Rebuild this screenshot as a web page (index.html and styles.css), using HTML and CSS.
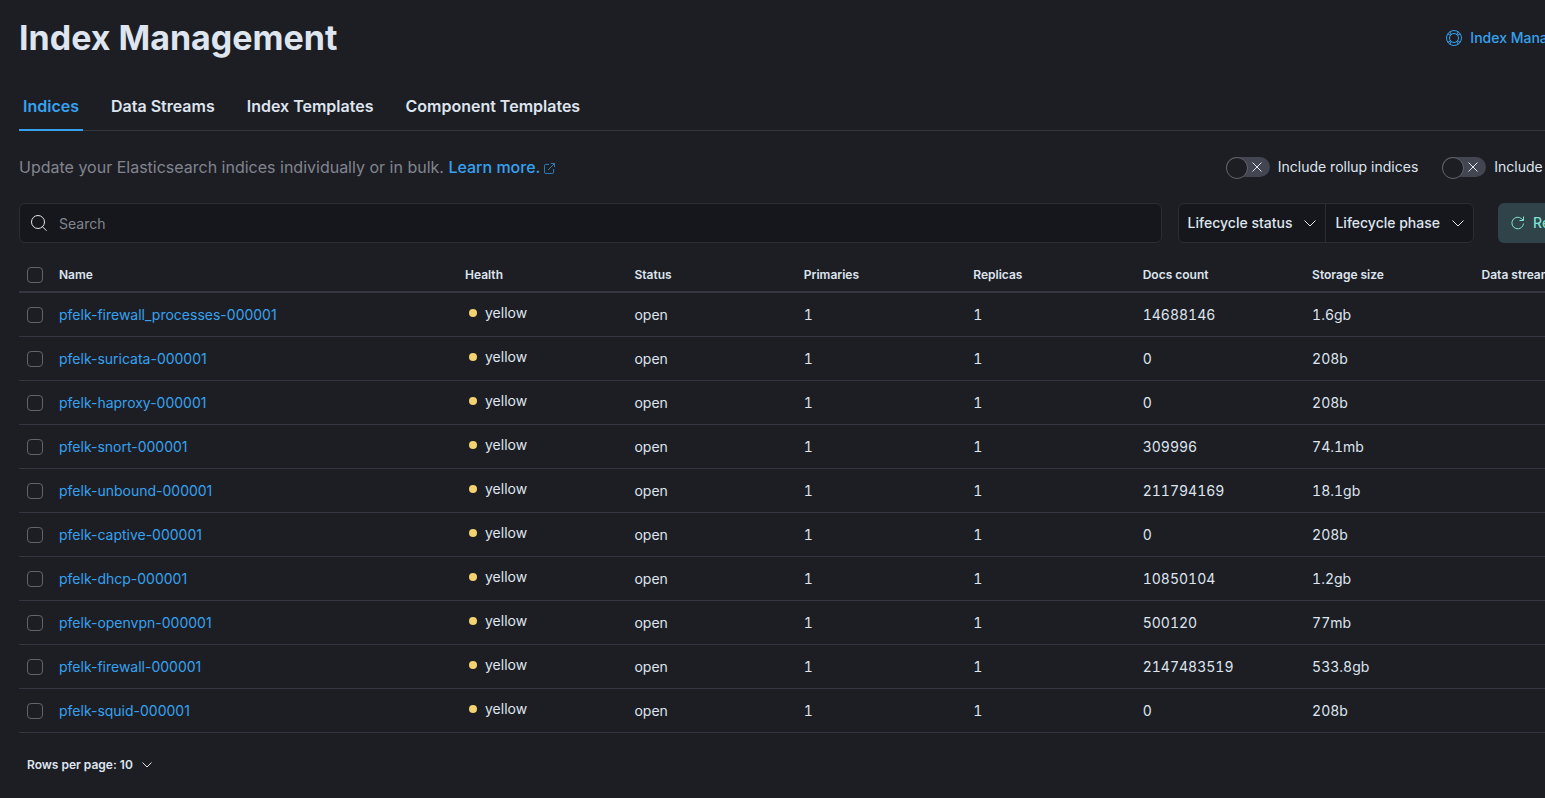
FILE: index.html
```html
<!DOCTYPE html>
<html lang="en">
<head>
  <meta charset="UTF-8">
  <meta name="viewport" content="width=device-width, initial-scale=1.0">
  <title>Index Management</title>
  <link rel="stylesheet" href="styles.css">
</head>
<body>
  <main class="page">
    <header class="page-header">
      <h1>Index Management</h1>
      <a class="docs-link" href="#docs">
        <svg width="16" height="16" viewBox="0 0 16 16" fill="none" stroke="currentColor"><circle cx="8" cy="8" r="7.5"/><circle cx="8" cy="8" r="4.5"/><path d="M1.800 3.800l3 1.500M3.800 1.800l1.500 3M12.200 1.800l-1.500 3M14.200 3.800l-3 1.500M14.200 12.200l-3-1.500M12.200 14.200l-1.500-3M3.800 14.200l1.500-3M1.800 12.200l3-1.500"/></svg>
        Index Management docs
      </a>
    </header>

    <nav class="tabs">
      <a class="tab active" href="#indices">Indices</a>
      <a class="tab" href="#data_streams">Data Streams</a>
      <a class="tab" href="#templates">Index Templates</a>
      <a class="tab" href="#component_templates">Component Templates</a>
    </nav>

    <div class="intro">
      <p class="description">Update your Elasticsearch indices individually or in bulk.
        <a href="#learn">Learn more.<svg class="external" width="11" height="11" viewBox="0 0 12 12" fill="none" stroke="currentColor"><path d="M5.500 1.500H2A1.500 1.500 0 0 0 .5 3v7A1.500 1.500 0 0 0 2 11.500h7A1.500 1.500 0 0 0 10.500 10V6.500M7.500.5h4V4.500M11.500.5L4.500 7.500"/></svg></a>
      </p>
      <div class="switches">
        <label class="switch">
          <span class="switch-body">
            <input type="checkbox">
            <svg width="10" height="10" viewBox="0 0 10 10" stroke="currentColor"><path d="M.5.5l9 9M9.500.5l-9 9"/></svg>
          </span>
          Include rollup indices
        </label>
        <label class="switch">
          <span class="switch-body">
            <input type="checkbox">
            <svg width="10" height="10" viewBox="0 0 10 10" stroke="currentColor"><path d="M.5.5l9 9M9.500.5l-9 9"/></svg>
          </span>
          Include hidden indices
        </label>
      </div>
    </div>

    <div class="toolbar">
      <label class="search">
        <svg width="16" height="16" viewBox="0 0 16 16" fill="none" stroke="currentColor"><circle cx="7" cy="7" r="6.500"/><path d="M11.300 11.500l4 4" stroke-linecap="round"/></svg>
        <input type="search" placeholder="Search" aria-label="Search">
      </label>
      <div class="filters">
        <button class="filter">Lifecycle status <svg width="12" height="7" viewBox="0 0 12 7" fill="none" stroke="currentColor"><path d="M.5.5L6 6 11.500.5"/></svg></button>
        <button class="filter">Lifecycle phase <svg width="12" height="7" viewBox="0 0 12 7" fill="none" stroke="currentColor"><path d="M.5.5L6 6 11.500.5"/></svg></button>
      </div>
      <button class="reload">
        <svg width="14" height="14" viewBox="0 0 14 14" fill="none" stroke="currentColor"><path d="M12.500 7.500A5.800 5.800 0 1 1 10.800 2.900L12.500 4.500M12.500.5v4h-4"/></svg>
        Reload indices
      </button>
    </div>

    <table class="indices">
      <thead>
        <tr>
          <th class="check"><input type="checkbox" aria-label="Select all rows"></th>
          <th class="name">Name</th>
          <th>Health</th>
          <th>Status</th>
          <th>Primaries</th>
          <th>Replicas</th>
          <th>Docs count</th>
          <th>Storage size</th>
          <th>Data stream</th>
        </tr>
      </thead>
      <tbody>
        <tr>
          <td class="check"><input type="checkbox" aria-label="Select pfelk-firewall_processes-000001"></td>
          <td><a href="#index">pfelk-firewall_processes-000001</a></td>
          <td><span class="health">yellow</span></td>
          <td>open</td>
          <td>1</td>
          <td>1</td>
          <td>14688146</td>
          <td>1.6gb</td>
          <td></td>
        </tr>
        <tr>
          <td class="check"><input type="checkbox" aria-label="Select pfelk-suricata-000001"></td>
          <td><a href="#index">pfelk-suricata-000001</a></td>
          <td><span class="health">yellow</span></td>
          <td>open</td>
          <td>1</td>
          <td>1</td>
          <td>0</td>
          <td>208b</td>
          <td></td>
        </tr>
        <tr>
          <td class="check"><input type="checkbox" aria-label="Select pfelk-haproxy-000001"></td>
          <td><a href="#index">pfelk-haproxy-000001</a></td>
          <td><span class="health">yellow</span></td>
          <td>open</td>
          <td>1</td>
          <td>1</td>
          <td>0</td>
          <td>208b</td>
          <td></td>
        </tr>
        <tr>
          <td class="check"><input type="checkbox" aria-label="Select pfelk-snort-000001"></td>
          <td><a href="#index">pfelk-snort-000001</a></td>
          <td><span class="health">yellow</span></td>
          <td>open</td>
          <td>1</td>
          <td>1</td>
          <td>309996</td>
          <td>74.1mb</td>
          <td></td>
        </tr>
        <tr>
          <td class="check"><input type="checkbox" aria-label="Select pfelk-unbound-000001"></td>
          <td><a href="#index">pfelk-unbound-000001</a></td>
          <td><span class="health">yellow</span></td>
          <td>open</td>
          <td>1</td>
          <td>1</td>
          <td>211794169</td>
          <td>18.1gb</td>
          <td></td>
        </tr>
        <tr>
          <td class="check"><input type="checkbox" aria-label="Select pfelk-captive-000001"></td>
          <td><a href="#index">pfelk-captive-000001</a></td>
          <td><span class="health">yellow</span></td>
          <td>open</td>
          <td>1</td>
          <td>1</td>
          <td>0</td>
          <td>208b</td>
          <td></td>
        </tr>
        <tr>
          <td class="check"><input type="checkbox" aria-label="Select pfelk-dhcp-000001"></td>
          <td><a href="#index">pfelk-dhcp-000001</a></td>
          <td><span class="health">yellow</span></td>
          <td>open</td>
          <td>1</td>
          <td>1</td>
          <td>10850104</td>
          <td>1.2gb</td>
          <td></td>
        </tr>
        <tr>
          <td class="check"><input type="checkbox" aria-label="Select pfelk-openvpn-000001"></td>
          <td><a href="#index">pfelk-openvpn-000001</a></td>
          <td><span class="health">yellow</span></td>
          <td>open</td>
          <td>1</td>
          <td>1</td>
          <td>500120</td>
          <td>77mb</td>
          <td></td>
        </tr>
        <tr>
          <td class="check"><input type="checkbox" aria-label="Select pfelk-firewall-000001"></td>
          <td><a href="#index">pfelk-firewall-000001</a></td>
          <td><span class="health">yellow</span></td>
          <td>open</td>
          <td>1</td>
          <td>1</td>
          <td>2147483519</td>
          <td>533.8gb</td>
          <td></td>
        </tr>
        <tr>
          <td class="check"><input type="checkbox" aria-label="Select pfelk-squid-000001"></td>
          <td><a href="#index">pfelk-squid-000001</a></td>
          <td><span class="health">yellow</span></td>
          <td>open</td>
          <td>1</td>
          <td>1</td>
          <td>0</td>
          <td>208b</td>
          <td></td>
        </tr>
      </tbody>
    </table>

    <button class="page-size">Rows per page: 10 <svg width="10" height="6" viewBox="0 0 10 6" fill="none" stroke="currentColor"><path d="M.5.5L5 5 9.500.5"/></svg></button>
  </main>
</body>
</html>
```
FILE: styles.css
```css
* {
  box-sizing: border-box;
}
body {
  margin: 0;
  background: #1d1e24;
  color: #dfe5ef;
  font-family: Inter, sans-serif;
  font-size: 14px;
  line-height: 24px;
  overflow-x: hidden;
}
a {
  color: #36a2ef;
  text-decoration: none;
}
button {
  font: inherit;
  color: inherit;
  background: none;
  border: none;
  white-space: nowrap;
  cursor: pointer;
}
svg {
  flex: none;
}
/* the content is wider than the window, its right edge runs off */
.page {
  margin: 0 -98px 0 19px;
  padding-top: 16px;
}
.page-header {
  display: flex;
  justify-content: space-between;
  align-items: center;
  height: 44px;
  margin-bottom: 23px;
}
h1 {
  margin: 0;
  font-size: 34px;
  line-height: 44px;
  font-weight: 700;
}
.docs-link {
  display: flex;
  align-items: center;
  gap: 8px;
  padding-right: 8px;
  font-weight: 500;
}
.tabs {
  display: flex;
  gap: 24px;
  box-shadow: inset 0 -1px #343741;
}
.tab {
  padding: 0 4px 2px;
  color: #dfe5ef;
  font-size: 16px;
  line-height: 46px;
  font-weight: 600;
}
.tab.active {
  color: #36a2ef;
  box-shadow: inset 0 -2px #36a2ef;
}
.intro {
  display: flex;
  justify-content: space-between;
  align-items: center;
  margin: 24px 0;
}
.description {
  margin: 0;
  color: #81858f;
  font-size: 16px;
}
.description a {
  font-weight: 500;
}
.external {
  margin-left: 4px;
  vertical-align: -1px;
  opacity: 0.8;
}
.switches {
  display: flex;
  gap: 24px;
}
.switch {
  display: flex;
  align-items: center;
  gap: 8px;
}
.switch-body {
  position: relative;
  display: flex;
}
.switch-body input {
  appearance: none;
  width: 44px;
  height: 20px;
  margin: 0;
  border-radius: 10px;
  background: #434650;
}
.switch-body input::before {
  content: "";
  display: block;
  width: 20px;
  height: 20px;
  border: 1px solid #62646b;
  border-radius: 50%;
  background: #1d1e24;
}
.switch-body svg {
  position: absolute;
  top: 5px;
  right: 8px;
}
.toolbar {
  display: flex;
  height: 40px;
}
.search {
  flex: 1;
  display: flex;
  align-items: center;
  gap: 12px;
  margin-right: 16px;
  padding: 0 11px;
  border: 1px solid #2b2d34;
  border-radius: 6px;
  background: #16171c;
}
.search input {
  flex: 1;
  padding: 2px 0 0;
  border: none;
  outline: none;
  background: none;
  color: inherit;
  font: inherit;
}
.search input::placeholder {
  color: #81858f;
}
.filters {
  display: flex;
  margin-right: 24px;
  border: 1px solid #2b2d34;
  border-radius: 6px;
  background: #16171c;
}
.filter {
  display: flex;
  align-items: center;
  gap: 12px;
  padding: 0 9px;
  font-weight: 500;
}
.filter + .filter {
  border-left: 1px solid #2b2d34;
}
.reload {
  display: flex;
  align-items: center;
  gap: 8px;
  width: 145px;
  padding: 0 13px;
  border-radius: 6px;
  background: #2f4348;
  color: #7de2d1;
  font-weight: 500;
}
.indices {
  width: 100%;
  margin-top: 14px;
  table-layout: fixed;
  border-spacing: 0;
}
th,
td {
  padding: 0 8px;
  text-align: left;
  white-space: nowrap;
}
th {
  height: 36px;
  padding-top: 2px;
  border-bottom: 2px solid #343741;
  font-size: 12px;
  font-weight: 600;
}
td {
  height: 44px;
  border-bottom: 1px solid #343741;
  font-feature-settings: "tnum" 1;
}
td a {
  font-feature-settings: "tnum" 0;
}
.check {
  width: 32px;
}
.name {
  width: 25%;
}
.check input {
  appearance: none;
  display: block;
  width: 16px;
  height: 16px;
  margin: 0;
  border: 1px solid #62646b;
  border-radius: 4px;
}
.health {
  display: flex;
  align-items: center;
  gap: 8px;
  padding: 0 4px 3px;
}
.health::before {
  content: "";
  width: 8px;
  height: 8px;
  border-radius: 50%;
  background: #f3d371;
}
.page-size {
  display: flex;
  align-items: center;
  gap: 9px;
  height: 32px;
  margin-top: 16px;
  padding: 0 8px;
  font-size: 12px;
  font-weight: 600;
}
```
